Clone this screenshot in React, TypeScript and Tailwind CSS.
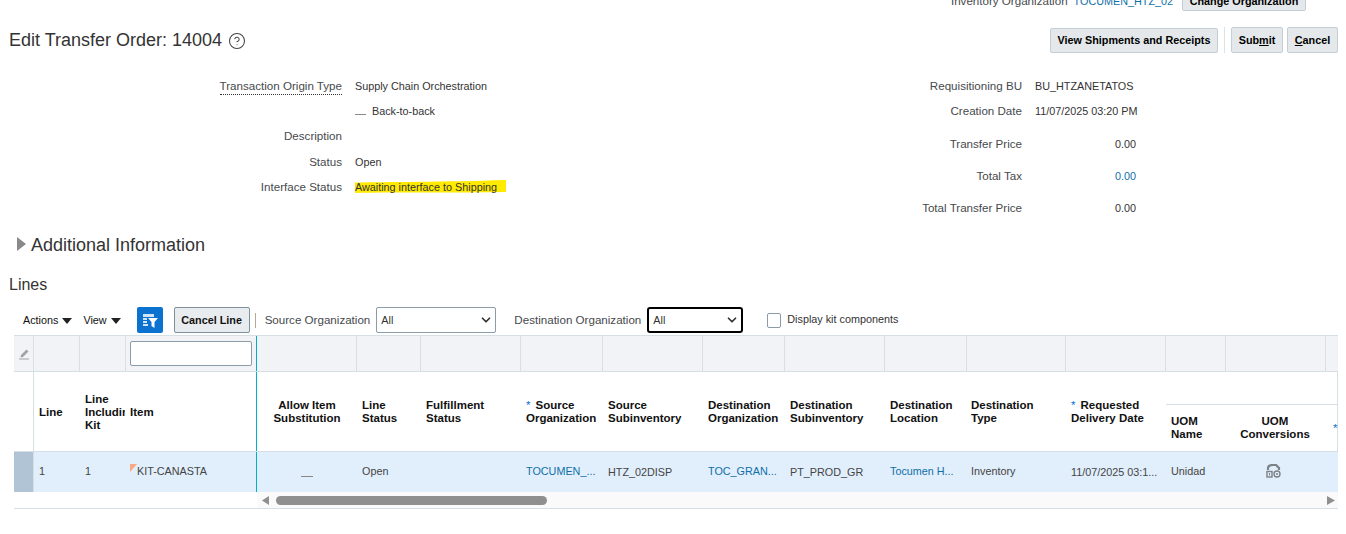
import { ChevronDown, CircleHelp } from "lucide-react";

const columns = [
  { title: ["Line"], value: "1" },
  { title: ["Line", "Including", "Kit"], value: "1" },
  { title: ["Item"], value: "KIT-CANASTA" },
  { title: ["Allow Item", "Substitution"], value: "dash", center: true },
  { title: ["Line", "Status"], value: "Open" },
  { title: ["Fulfillment", "Status"], value: "" },
  { title: ["Source", "Organization"], value: "TOCUMEN_...", link: true, required: true },
  { title: ["Source", "Subinventory"], value: "HTZ_02DISP", low: true },
  { title: ["Destination", "Organization"], value: "TOC_GRAN...", link: true },
  { title: ["Destination", "Subinventory"], value: "PT_PROD_GR", low: true },
  { title: ["Destination", "Location"], value: "Tocumen H...", link: true },
  { title: ["Destination", "Type"], value: "Inventory" },
  { title: ["Requested", "Delivery Date"], value: "11/07/2025 03:1...", required: true, low: true },
];

function Field({ label, children, dotted, raise }: { label: string; children?: React.ReactNode; dotted?: boolean; raise?: boolean }) {
  return (
    <>
      <div className={`flex items-center justify-end text-[11.6px] leading-[16px] text-[#46494d] ${raise ? "pb-[2px]" : ""}`}>
        <span className={dotted ? "border-b border-dotted border-[#333]" : ""}>{label}</span>
      </div>
      <div className="flex items-center text-[#333]">{children}</div>
    </>
  );
}

function Button({ children, className }: { children: React.ReactNode; className: string }) {
  return (
    <button className={`flex items-center justify-center rounded-[2px] border border-[#c4ced7] bg-[#e4e8ea] pt-px font-bold text-[#000] ${className}`}>
      {children}
    </button>
  );
}

function Select({ className }: { className: string }) {
  return (
    <div className={`flex items-center justify-between bg-white pl-[4px] pr-[2px] text-[#333] ${className}`}>
      <span>All</span>
      <ChevronDown size={14} strokeWidth={3} className="text-[#333]" />
    </div>
  );
}

export default function App() {
  return (
    <div className="h-[534px] w-[1346px] overflow-hidden bg-white font-['Liberation_Sans',Arial,sans-serif] text-[10.8px]">
      {/* Clipped top bar */}
      <div className="mt-[-9px] flex h-[20px] items-center justify-end pr-[40px]">
        <span className="text-[11.6px] text-[#46494d]">Inventory Organization</span>
        <span className="ml-[6px] text-[#0f6fa8]">TOCUMEN_HTZ_02</span>
        <Button className="ml-[9px] h-[20px] w-[124px] border-[#8a9aa8]">Change Organization</Button>
      </div>

      {/* Title */}
      <div className="mt-[16px] flex h-[26px] items-center pl-[9px] pr-[8px]">
        <h1 className="text-[18px] text-[#333]">Edit Transfer Order: 14004</h1>
        <CircleHelp size={18} strokeWidth={1.4} className="ml-[6px] mt-[1px] text-[#444]" />
        <Button className="ml-auto h-[25px] w-[168px]">View Shipments and Receipts</Button>
        <div className="mx-[6px] h-[26px] w-px bg-[#dde2e6]" />
        <Button className="h-[26px] w-[52px]">
          <span>
            Sub<span className="underline">m</span>it
          </span>
        </Button>
        <Button className="ml-[4px] h-[26px] w-[51px]">
          <span>
            <span className="underline">C</span>ancel
          </span>
        </Button>
      </div>

      {/* Header form */}
      <div className="mt-[21px] flex h-[150px]">
        <div className="grid w-[680px] grid-cols-[342px_1fr] grid-rows-[25px_25px_25px_26px_25px] gap-x-[13px]">
          <Field label="Transaction Origin Type" dotted>
            Supply Chain Orchestration
          </Field>
          <Field label="">
            <span className="mt-[6px] h-px w-[11px] bg-[#888]" />
            <span className="ml-[6px]">Back-to-back</span>
          </Field>
          <Field label="Description" raise />
          <Field label="Status">
            <span className="pt-px">Open</span>
          </Field>
          <Field label="Interface Status" raise>
            <span className="relative">
              <svg className="absolute left-0 top-[1px] h-[13px] w-[151px]" viewBox="0 0 151 13">
                <path d="M0 2.5 C30 2 90 2 151 0 L151 12 C100 13 40 12 0 13 Z" fill="#ffea00" />
              </svg>
              <span className="relative">Awaiting interface to Shipping</span>
            </span>
          </Field>
        </div>
        <div className="flex flex-col">
          <div className="grid grid-cols-[342px_101px] grid-rows-[25px_25px] gap-x-[13px]">
            <Field label="Requisitioning BU" raise>BU_HTZANETATOS</Field>
            <Field label="Creation Date" raise>
              <span className="whitespace-nowrap">11/07/2025 03:20 PM</span>
            </Field>
          </div>
          <div className="mt-[4px] grid grid-cols-[342px_101px] grid-rows-[32px_32px_32px] gap-x-[13px]">
            <Field label="Transfer Price">
              <span className="w-full text-right">0.00</span>
            </Field>
            <Field label="Total Tax">
              <span className="w-full text-right text-[#0f6fa8]">0.00</span>
            </Field>
            <Field label="Total Transfer Price">
              <span className="w-full text-right">0.00</span>
            </Field>
          </div>
        </div>
      </div>

      {/* Additional information */}
      <div className="mt-[9px] flex h-[24px] items-center pl-[17px]">
        <svg width="9" height="14" viewBox="0 0 9 14" className="mt-[-3px]">
          <path d="M0 0 L9 7 L0 14 Z" fill="#8a8a8a" />
        </svg>
        <span className="ml-[5px] text-[18px] text-[#333]">Additional Information</span>
      </div>
      <div className="mt-[17px] flex h-[20px] items-center pl-[9px] pt-[2px] text-[16px] text-[#333]">Lines</div>

      {/* Toolbar */}
      <div className="mt-[12px] flex h-[28px] items-center pl-[23px] text-[#333]">
        <span className="text-[#111]">Actions</span>
        <svg width="10" height="6" viewBox="0 0 10 6" className="ml-[4px] mt-[2px]"><path d="M0 0 H10 L5 6 Z" fill="#222" /></svg>
        <span className="ml-[11px] text-[#111]">View</span>
        <svg width="10" height="6" viewBox="0 0 10 6" className="ml-[4px] mt-[2px]"><path d="M0 0 H10 L5 6 Z" fill="#222" /></svg>
        <div className="ml-[16px] flex h-[26px] w-[26px] items-center justify-center rounded-[2px] bg-[#0b72d0]">
          <svg width="16" height="15" viewBox="0 0 16 15">
            <path d="M1 1 H12 V4 H1 Z" fill="#cfe4f7" />
            <path d="M1 5 H5 V7 H1 Z M1 8 H5 V10 H1 Z M1 11 H6 V13 H1 Z" fill="#cfe4f7" />
            <path d="M6 5 H16 L12.5 9 V15 L9.5 13 V9 Z" fill="#fff" />
          </svg>
        </div>
        <button className="ml-[11px] h-[26px] w-[76px] rounded-[2px] border border-[#7f8f9b] bg-[#e9ecee] pt-px font-bold text-[#111]">Cancel Line</button>
        <div className="ml-[5px] h-[15px] w-px bg-[#b3aa96]" />
        <span className="ml-[9px] text-[11.6px] leading-[16px] text-[#46494d]">Source Organization</span>
        <Select className="ml-[6px] h-[26px] w-[120px] rounded-[2px] border border-[#8c9ba8]" />
        <span className="ml-[18px] text-[11.6px] leading-[16px] text-[#46494d]">Destination Organization</span>
        <Select className="ml-[6px] h-[26px] w-[96px] rounded-[3px] border-2 border-black" />
        <div className="ml-[24px] h-[15px] w-[14px] rounded-[2px] border border-[#8c9ba8]" />
        <span className="mb-[2px] ml-[6px] text-[#333]">Display kit components</span>
      </div>

      {/* Table */}
      <div className="ml-[14px] mt-px w-[1324px]">
        <div className="grid h-[37px] grid-cols-[20px_46px_46px_131px_100px_64px_100px_82px_100px_82px_100px_82px_99px_100px_60px_100px_12px] border-y border-[#d6dfe6] bg-[#f1f3f6]">
          <div className="flex items-center justify-center border-r border-[#d6dfe6]">
            <svg width="12" height="12" viewBox="0 0 12 12">
              <path d="M3 7 L8.5 1.5 L10.5 3.5 L5 9 L2.5 9.5 Z" fill="#a3a3a3" />
              <path d="M1 11 H11" stroke="#a3a3a3" />
            </svg>
          </div>
          <div className="border-r border-[#d6dfe6]" />
          <div className="border-r border-[#d6dfe6]" />
          <div className="border-r border-[#00aecb] pl-[4px] pt-[5px]">
            <div className="h-[25px] w-[122px] rounded-[2px] border border-[#8c9ba8] bg-white" />
          </div>
          {["a", "b", "c", "d", "e", "f", "g", "h", "i", "j", "k", "l"].map((k) => (
            <div key={k} className="border-r border-[#d6dfe6]" />
          ))}
          <div />
        </div>

        <div className="grid h-[80px] grid-cols-[20px_46px_46px_131px_100px_64px_100px_82px_100px_82px_100px_82px_99px_100px_60px_100px_12px] border-b border-[#d6dfe6] text-[11.5px] font-bold leading-[13px] text-[#111]">
          <div className="border-r border-[#d6dfe6]" />
          {columns.map((c, i) => (
            <div
              key={i}
              className={`flex items-center overflow-hidden whitespace-nowrap ${c.center ? "justify-center text-center" : "pl-[5px]"} ${i < 3 ? "pt-[2px]" : ""} ${i === 1 ? "border-r border-transparent" : ""} ${i === 2 ? "border-r border-[#00aecb] !pl-[4px]" : ""} ${i === 11 ? "!pl-[4px]" : ""}`}
            >
              <div>
                {c.title.map((t, j) => (
                  <div key={j}>
                    {c.required && j === 0 && <span className="mr-[5px] font-normal text-[#0b72d0]">*</span>}
                    {t}
                  </div>
                ))}
              </div>
            </div>
          ))}
          <div className="col-span-3 flex flex-col border-r border-[#d6dfe6]">
            <div className="h-[33px] border-b border-[#d6dfe6]" />
            <div className="grid flex-1 grid-cols-[60px_100px_12px]">
              <div className="flex items-center pl-[5px]">
                <div>
                  <div>UOM</div>
                  <div>Name</div>
                </div>
              </div>
              <div className="flex items-center justify-center pr-[2px] text-center">
                <div>
                  <div>UOM</div>
                  <div>Conversions</div>
                </div>
              </div>
              <div className="flex items-center pl-[7px] font-normal text-[#0b72d0]">*</div>
            </div>
          </div>
        </div>

        <div className="grid h-[40px] grid-cols-[20px_46px_46px_131px_100px_64px_100px_82px_100px_82px_100px_82px_99px_100px_60px_100px_12px] bg-[#e1eefb] text-[#444]">
          <div className="border-r border-[#d6dfe6] bg-[#b0c4d6]" />
          {columns.map((c, i) => (
            <div
              key={i}
              className={`flex items-center overflow-hidden whitespace-nowrap ${c.center ? "justify-center" : "pl-[5px]"} ${c.low ? "" : "pb-[2px]"} ${c.link ? "text-[#0f6fa8]" : ""} ${i === 2 ? "border-r border-[#00aecb] !pl-[4px]" : ""} ${i === 11 ? "!pl-[4px]" : ""}`}
            >
              {c.value === "dash" ? (
                <span className="mt-[10px] h-px w-[12px] bg-[#888]" />
              ) : i === 2 ? (
                <>
                  <svg width="7" height="8" viewBox="0 0 7 8" className="mt-[-6px] shrink-0">
                    <path d="M0 0 H7 L0 8 Z" fill="#f8a884" />
                  </svg>
                  {c.value}
                </>
              ) : (
                c.value
              )}
            </div>
          ))}
          <div className="flex items-center pb-[2px] pl-[5px]">Unidad</div>
          <div className="flex items-center justify-center pb-[2px] pr-[5px]">
            <svg width="15" height="14" viewBox="0 0 15 14">
              <path d="M2 6 V4 C2 2 4 1 7 1 H10 L13 4 V6" fill="none" stroke="#7d8287" strokeWidth="2.2" />
              <rect x="1" y="7.5" width="5" height="5.5" fill="none" stroke="#7d8287" strokeWidth="1.4" />
              <circle cx="11" cy="10" r="3" fill="none" stroke="#7d8287" strokeWidth="1.4" />
              <path d="M3 9 H4 V11.5 H3 Z" fill="#7d8287" />
              <circle cx="11" cy="10" r="1" fill="#7d8287" />
            </svg>
          </div>
          <div />
        </div>

        {/* Horizontal scrollbar */}
        <div className="flex h-[17px] items-center border-b border-[#d6dfe6] pl-[243px]">
          <div className="flex h-full flex-1 items-center bg-[#fafafa] pl-[5px] pr-[3px]">
            <svg width="7" height="9" viewBox="0 0 7 9"><path d="M7 0 V9 L0 4.5 Z" fill="#8f8f8f" /></svg>
            <div className="ml-[7px] h-[9px] w-[271px] rounded-full bg-[#8f8f8f]" />
            <svg width="8" height="9" viewBox="0 0 8 9" className="ml-auto"><path d="M0 0 V9 L8 4.5 Z" fill="#8f8f8f" /></svg>
          </div>
        </div>
      </div>
    </div>
  );
}
